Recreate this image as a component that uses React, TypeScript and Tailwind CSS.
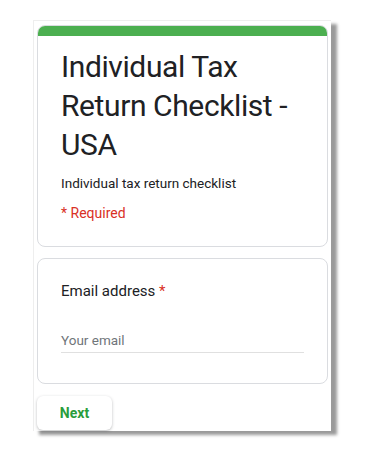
export default function App() {
  return (
    <div className="w-full h-[453px] bg-white pt-[20px] pl-[33px]" style={{ fontFamily: "Roboto, Arial, sans-serif" }}>
      <div className="w-[298px] h-[411px] bg-white border-l border-t border-[#eeeeee] shadow-[6px_4px_3px_#9a9a9a] pt-[4px] pl-[3px]">
        <div className="w-[291px] rounded-lg border border-[#dadce0] overflow-hidden bg-white">
          <div className="h-[10px] bg-[#4caf50]" />
          <div className="px-[23px] pt-[11px] pb-[23px]">
            <h1 className="text-[30px] leading-[39px] tracking-[-0.4px] text-[#202124] font-normal">
              Individual Tax Return Checklist - USA
            </h1>
            <p className="mt-[9px] text-[13.5px] leading-[20px] text-[#202124]">Individual tax return checklist</p>
            <p className="mt-[10px] text-[14px] leading-[20px] text-[#d93025]">* Required</p>
          </div>
        </div>
        <div className="mt-[11px] w-[291px] rounded-lg border border-[#dadce0] bg-white px-[23px] pt-[20px] pb-[30px]">
          <div className="text-[15px] leading-[24px] text-[#202124]">
            Email address <span className="text-[#d93025]">*</span>
          </div>
          <div className="mt-[27px] border-b border-[#e0e0e0] pb-[2px]">
            <div className="text-[13.5px] leading-[20px] text-[#70757a]">Your email</div>
          </div>
        </div>
        <button className="mt-[12px] w-[75px] h-[34px] rounded-md bg-white shadow-[0_1px_3px_rgba(60,64,67,0.35)] text-[14px] font-bold text-[#2a9d3c]">
          Next
        </button>
      </div>
    </div>
  );
}
